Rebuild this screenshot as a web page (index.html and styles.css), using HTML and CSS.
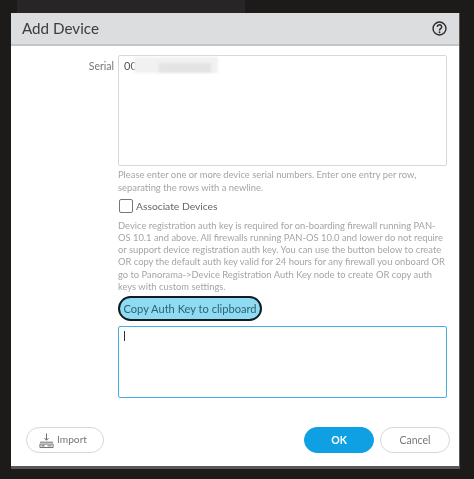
FILE: index.html
```html
<!DOCTYPE html>
<html lang="en">
<head>
<meta charset="utf-8">
<title>Add Device</title>
<link rel="stylesheet" href="styles.css">
</head>
<body>
<div class="backdrop-strip"></div>
<section class="dialog">
  <header class="dialog-head">
    <h1>Add Device</h1>
    <svg class="help" viewBox="0 0 16 16" width="15" height="15" aria-label="Help">
      <circle cx="8" cy="8" r="6.9" fill="none" stroke="#2b2b2b" stroke-width="1.5"/>
      <path d="M5.7 6.300a2.300 2.300 0 1 1 3.600 1.800c-.9.6-1.300 1-1.300 1.900" fill="none" stroke="#2b2b2b" stroke-width="1.600"/>
      <circle cx="8" cy="12" r="1" fill="#2b2b2b"/>
    </svg>
  </header>
  <div class="dialog-body">
    <div class="label">Serial</div>
    <div class="field">
      <div class="box serial-box">00<span class="redact"></span></div>
      <p class="hint">Please enter one or more device serial numbers. Enter one entry per row, separating the rows with a newline.</p>
      <label class="check"><span class="checkbox"></span>Associate Devices</label>
      <p class="hint note">Device registration auth key is required for on-boarding firewall running PAN-OS 10.1 and above. All firewalls running PAN-OS 10.0 and lower do not require or support device registration auth key. You can use the button below to create OR copy the default auth key valid for 24 hours for any firewall you onboard OR go to Panorama-&gt;Device Registration Auth Key node to create OR copy auth keys with custom settings.</p>
      <button class="copy" type="button">Copy Auth Key to clipboard</button>
      <div class="box key-box"><span class="caret"></span></div>
    </div>
  </div>
  <footer class="dialog-foot">
    <button class="btn import" type="button">
      <svg viewBox="0 0 16 16" width="15" height="17" aria-hidden="true">
        <path d="M8 .5v7M5.800 5.400 8 7.800l2.200-2.400M1 9.800h14M1 11.800h14v3.700H1zM9 13.700h4.500" fill="none" stroke="#666" stroke-width="1"/>
        <path d="M2.500 13.700h3.500" stroke="#666" stroke-width="1.200"/>
      </svg>
      <span class="import-label">Import</span>
    </button>
    <button class="btn ok" type="button">OK</button>
    <button class="btn cancel" type="button">Cancel</button>
  </footer>
</section>
</body>
</html>
```
FILE: styles.css
```css
* { box-sizing: border-box; }
html, body { height: 100%; }
body {
  margin: 0;
  background: #1d1a1a;
  font-family: Lato, "Open Sans", sans-serif;
  overflow: hidden;
}
.backdrop-strip {
  height: 13px;
  width: 228px;
  margin-left: 17px;
  background: #272525;
}
.dialog {
  width: 449px;
  height: 456px;
  margin-left: 11px;
  background: #fff;
  border-bottom: 3px solid #585858;
  border-right: 1px solid #555;
  display: flex;
  flex-direction: column;
  filter: blur(0.35px);
}
.dialog-head {
  height: 33px;
  flex: none;
  background: #dcddde;
  border-bottom: 2px solid #c3c5c7;
  display: flex;
  align-items: center;
  justify-content: space-between;
  padding: 0 12px 1px 11px;
}
.dialog-head h1 {
  margin: 0;
  font-size: 15.200px;
  font-weight: 400;
  color: #3c3c3c;
}
.help { display: block; }
.dialog-body {
  flex: 1;
  display: grid;
  grid-template-columns: 103px 329px;
  column-gap: 4px;
  padding-top: 9px;
  align-content: start;
}
.label {
  text-align: right;
  font-size: 10.500px;
  line-height: 14px;
  padding-top: 4px;
  color: #777;
}
.field { display: flex; flex-direction: column; }
.box {
  position: relative;
  border: 1px solid #d6d8da;
  border-radius: 2px;
  background: #fff;
}
.serial-box {
  height: 111px;
  padding: 3px 5px;
  font-size: 11px;
  line-height: 14px;
  color: #555;
}
.redact {
  position: absolute;
  left: 15px;
  top: 1px;
  width: 84px;
  height: 16px;
  background: #f1f1f1;
  filter: blur(1.200px);
}
.redact::after {
  content: "";
  position: absolute;
  left: 25px;
  right: 7px;
  top: 6px;
  bottom: 0;
  background: #e4e4e4;
}
.hint {
  margin: 2px 0 0;
  font-size: 9.400px;
  line-height: 13px;
  color: #a3a5a7;
}
.check {
  display: flex;
  align-items: center;
  gap: 3px;
  margin-top: 4px;
  font-size: 10.300px;
  font-weight: 400;
  color: #666;
  height: 15px;
}
.checkbox {
  width: 14px;
  height: 14px;
  margin-left: 1px;
  border: 1.200px solid #777;
  border-radius: 2px;
}
.note {
  margin-top: 7px;
  line-height: 12.150px;
}
.copy {
  align-self: flex-start;
  width: 144px;
  height: 25px;
  margin-top: 3px;
  padding: 0;
  border: 2px solid #111c24;
  border-radius: 13px;
  background: #8fdcf2;
  color: #2f6076;
  font: 400 11.100px Lato, sans-serif;
  white-space: nowrap;
}
.key-box {
  height: 72px;
  margin-top: 5px;
  border-color: #45ade0;
}
.caret {
  position: absolute;
  left: 5px;
  top: 4px;
  width: 1px;
  height: 10px;
  background: #333;
}
.dialog-foot {
  flex: none;
  display: flex;
  align-items: center;
  padding: 0 9px 13px 15px;
}
.btn {
  height: 26px;
  border-radius: 13px;
  font: 400 10.500px Lato, sans-serif;
  background: #fff;
  border: 1px solid #d5d7d9;
  color: #777;
  padding: 0;
}
.import {
  width: 78px;
  margin-right: auto;
  display: flex;
  align-items: center;
  gap: 3px;
  padding-left: 12px;
}
.import-label { position: relative; top: -1px; font-size: 10.200px; }
.ok {
  width: 70px;
  background: #0f9fe3;
  border-color: #0f9fe3;
  color: #fff;
  font-weight: 700;
}
.cancel { width: 70px; margin-left: 6px; }
```
